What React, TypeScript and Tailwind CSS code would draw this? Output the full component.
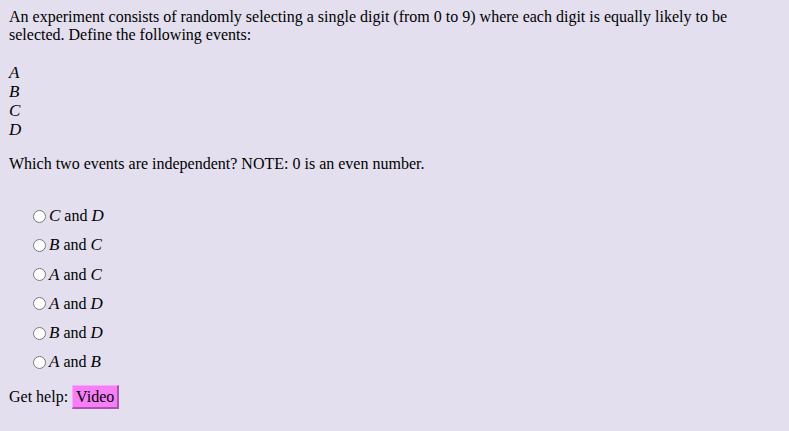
import React from "react";

const M = ({ children }: { children: React.ReactNode }) => (
  <span className="italic text-[17px]" style={{ fontFamily: '"Liberation Serif", serif' }}>{children}</span>
);

const options: [string, string][] = [
  ["C", "D"],
  ["B", "C"],
  ["A", "C"],
  ["A", "D"],
  ["B", "D"],
  ["A", "B"],
];

export default function App() {
  return (
    <div className="w-[789px] h-[431px] bg-[#e3dfef] text-black overflow-hidden font-['Liberation_Serif',serif] text-[16px] leading-[18px]">
      <div className="pl-[9px] pt-[8px] pr-[40px]">
        <p className="m-0">
          An experiment consists of randomly selecting a single digit (from 0 to 9) where each digit is equally likely to be selected. Define the following events:
        </p>
        <div className="mt-[19px] flex flex-col leading-[19px]">
          <M>A</M>
          <M>B</M>
          <M>C</M>
          <M>D</M>
        </div>
        <p className="mt-[16px]">Which two events are independent? NOTE: 0 is an even number.</p>
        <div className="mt-[34px] pl-[24px] flex flex-col gap-[11.3px]">
          {options.map(([a, b], i) => (
            <label key={i} className="flex items-center h-[18px]">
              <input type="radio" name="q" className="m-0 w-[13px] h-[13px] mr-[3px]" />
              <span>
                <M>{a}</M> and <M>{b}</M>
              </span>
            </label>
          ))}
        </div>
        <div className="mt-[14px] flex items-center">
          <span>Get help:</span>
          <span className="ml-[4px] h-[24px] px-[3px] flex items-center bg-[#f67ef6] border-t border-l border-t-[#f9a8f9] border-l-[#f9a8f9] border-r-2 border-b-2 border-r-[#b050b0] border-b-[#b050b0]">
            Video
          </span>
        </div>
      </div>
    </div>
  );
}
